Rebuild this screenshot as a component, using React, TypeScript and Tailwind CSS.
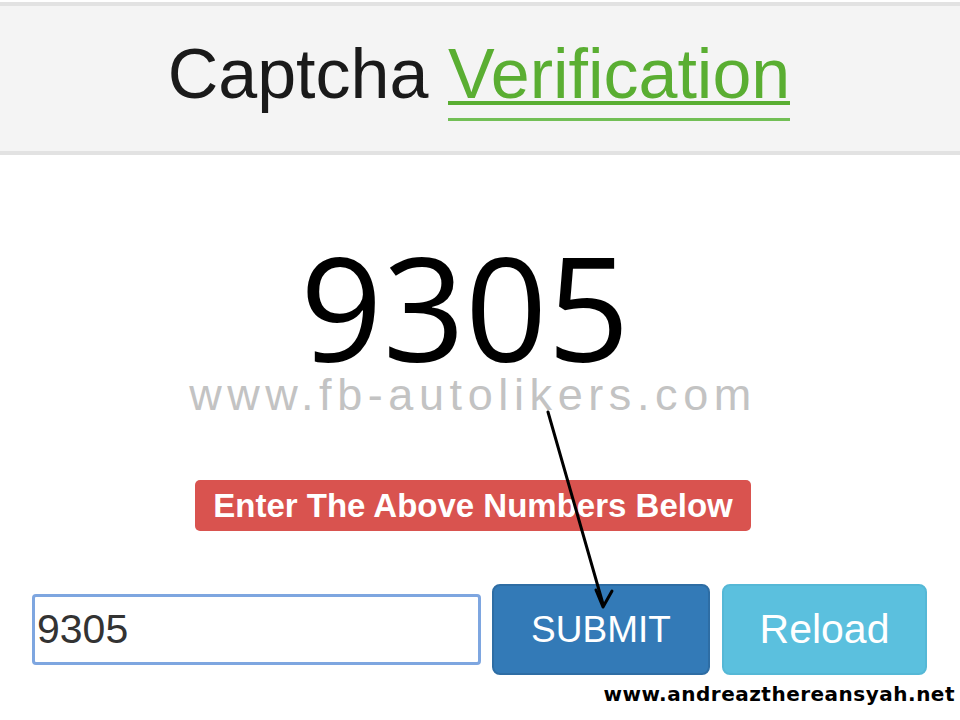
import React from 'react';

const App = () => {
  return (
    <div className="relative w-[960px] h-[720px] bg-white overflow-hidden" style={{ fontFamily: '"Liberation Sans", Arial, sans-serif' }}>
      <div className="mt-[2px] h-[153px] bg-[#f4f4f4] border-y-[4px] border-[#e2e2e2] flex items-center justify-center">
        <h1 className="text-[70px] leading-none text-[#1a1a1a] pb-[10px] pr-[2px]">
          Captcha{' '}
          <span className="relative inline-block text-[#5aae32]">
            Verification
            <span className="absolute left-0 right-0 bottom-[4px] h-[4px] bg-[#5aae32]" />
            <span className="absolute left-0 right-0 bottom-[-12px] h-[3px] bg-[#72bf55]" />
          </span>
        </h1>
      </div>

      <div className="flex flex-col items-center pr-[14px]">
        <div className="mt-[96px] pr-[16px] text-[144px] leading-[110px] text-black" style={{ fontFamily: '"Open Sans", sans-serif' }}>
          9305
        </div>
        <div className="mt-[11px] text-[45px] leading-none tracking-[5.6px] text-[#c3c3c3]">
          www.fb-autolikers.com
        </div>
        <div className="mt-[63px] h-[51px] px-[18px] flex items-center rounded-[5px] bg-[#d9534f] text-white font-bold text-[33px]">
          Enter The Above Numbers Below
        </div>
      </div>

      <div className="mt-[53px] pl-[32px] flex items-center gap-[11px]">
        <div className="w-[449px] h-[71px] border-[3px] border-[#7ea6e0] rounded-[4px] bg-white flex items-center pl-[2px] text-[41px] text-[#333]">
          9305
        </div>
        <button className="w-[218px] h-[91px] rounded-[8px] bg-[#337ab7] border-2 border-[#2e6da4] text-white text-[37px] flex items-center justify-center">
          SUBMIT
        </button>
        <button className="ml-[1px] w-[205px] h-[91px] rounded-[8px] bg-[#5bc0de] border-2 border-[#55b8d6] text-white text-[41px] flex items-center justify-center">
          Reload
        </button>
      </div>

      <div className="mt-[9px] pr-[5px] flex justify-end">
        <span className="text-[20px] leading-none font-bold text-black tracking-[0.5px]" style={{ fontFamily: '"DejaVu Sans", sans-serif' }}>
          www.andreazthereansyah.net
        </span>
      </div>

      <svg className="absolute inset-0 pointer-events-none" width="960" height="720" viewBox="0 0 960 720">
        <line x1="548" y1="412" x2="603" y2="604" stroke="#000" strokeWidth="3" strokeLinecap="round" />
        <polyline points="596,590 603,607 612,591" fill="none" stroke="#000" strokeWidth="3" strokeLinecap="round" strokeLinejoin="round" />
      </svg>
    </div>
  );
};

export default App;
